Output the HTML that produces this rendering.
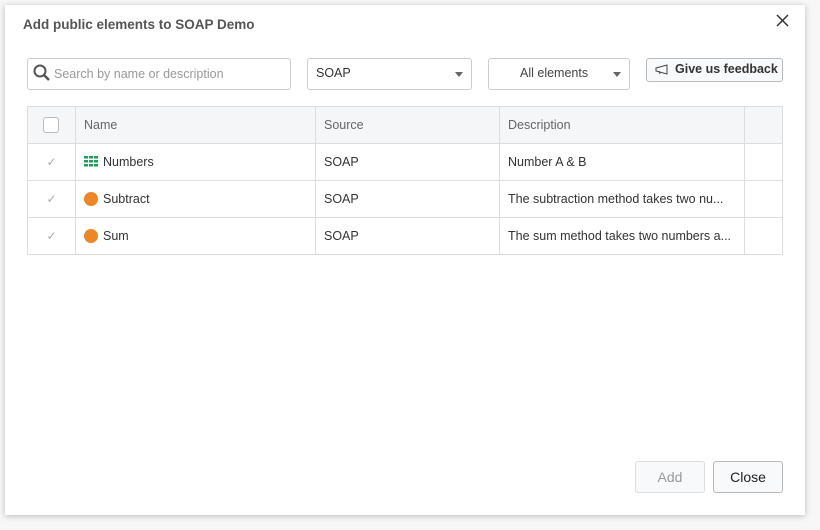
<!DOCTYPE html>
<html><head><style>
*{box-sizing:border-box;margin:0;padding:0}
body{width:820px;height:530px;background:#f7f7f7;font-family:"Liberation Sans",sans-serif;position:relative;overflow:hidden}
.dlg{position:absolute;left:5px;top:5px;width:800px;height:510px;background:#fff;box-shadow:0 1px 6px rgba(0,0,0,.25)}
.a{position:absolute}
.title{left:23px;top:17px;font-size:13.5px;font-weight:bold;color:#555}
.box{border:1px solid #ccc;border-radius:3px;background:#fff}
.tri{width:0;height:0;border-left:4px solid transparent;border-right:4px solid transparent;border-top:5px solid #666}
table{position:absolute;left:27px;top:106px;width:756px;border-collapse:collapse;font-size:12.5px;color:#333}
td{border:1px solid #ddd;height:37px;padding:0 8px;white-space:nowrap}
tr.h td{background:#f5f6f8;color:#666}
.dot{display:inline-block;width:14px;height:14px;border-radius:50%;background:#ec8626;vertical-align:-3px;margin-right:5px}
.chk{color:#aaa;text-align:center;font-size:12px}
.btn{border:1px solid #bbb;border-radius:3px;background:#f8f9fa;text-align:center;font-size:14px;line-height:30px;color:#222}
</style></head><body>
<div class="dlg"></div>
<div class="a title">Add public elements to SOAP Demo</div>
<svg class="a" style="left:776px;top:14px" width="13" height="13"><path d="M1 1L12 12M12 1L1 12" stroke="#333" stroke-width="1.5"/></svg>
<div class="a box" style="left:27px;top:58px;width:264px;height:32px"></div>
<svg class="a" style="left:33px;top:64px" width="18" height="18"><circle cx="7" cy="7" r="5.5" stroke="#555" stroke-width="2" fill="none"/><path d="M11 11L16 16" stroke="#555" stroke-width="2.5"/></svg>
<div class="a" style="left:54px;top:67px;font-size:12.5px;color:#999">Search by name or description</div>
<div class="a box" style="left:307px;top:58px;width:165px;height:32px"></div>
<div class="a" style="left:316px;top:66px;font-size:12.5px;color:#333">SOAP</div>
<div class="a tri" style="left:455px;top:72px"></div>
<div class="a box" style="left:488px;top:58px;width:142px;height:32px"></div>
<div class="a" style="left:520px;top:66px;font-size:12.5px;color:#444">All elements</div>
<div class="a tri" style="left:613px;top:72px"></div>
<div class="a box" style="left:646px;top:58px;width:137px;height:24px;background:#f8f9fa;border-color:#bbb"></div>
<svg class="a" style="left:655px;top:64px" width="16" height="12"><path d="M1 4L12 1L12 10L1 7Z M4 7L5 10" stroke="#444" fill="none" stroke-width="1"/></svg>
<div class="a" style="left:675px;top:62px;font-size:12.5px;font-weight:bold;color:#333">Give us feedback</div>
<table>
<tr class="h"><td style="width:48px"><div style="width:16px;height:16px;border:1px solid #bbb;border-radius:3px;background:#fff;margin-left:7px"></div></td><td style="width:240px">Name</td><td style="width:184px">Source</td><td style="width:245px">Description</td><td></td></tr>
<tr><td class="chk">✓</td><td><svg width="15" height="11" style="vertical-align:-1px;margin-right:4px"><g fill="#1ea05a"><rect x="0" y="0" width="4" height="2.5"/><rect x="5" y="0" width="4" height="2.5"/><rect x="10" y="0" width="4" height="2.5"/><rect x="0" y="4" width="4" height="2.5"/><rect x="5" y="4" width="4" height="2.5"/><rect x="10" y="4" width="4" height="2.5"/><rect x="0" y="8" width="4" height="2.5"/><rect x="5" y="8" width="4" height="2.5"/><rect x="10" y="8" width="4" height="2.5"/></g></svg>Numbers</td><td>SOAP</td><td>Number A &amp; B</td><td></td></tr>
<tr><td class="chk">✓</td><td><span class="dot"></span>Subtract</td><td>SOAP</td><td>The subtraction method takes two nu...</td><td></td></tr>
<tr><td class="chk">✓</td><td><span class="dot"></span>Sum</td><td>SOAP</td><td>The sum method takes two numbers a...</td><td></td></tr>
</table>
<div class="a btn" style="left:635px;top:461px;width:70px;height:32px;color:#999;border-color:#ddd">Add</div>
<div class="a btn" style="left:713px;top:461px;width:70px;height:32px">Close</div>
</body></html>
